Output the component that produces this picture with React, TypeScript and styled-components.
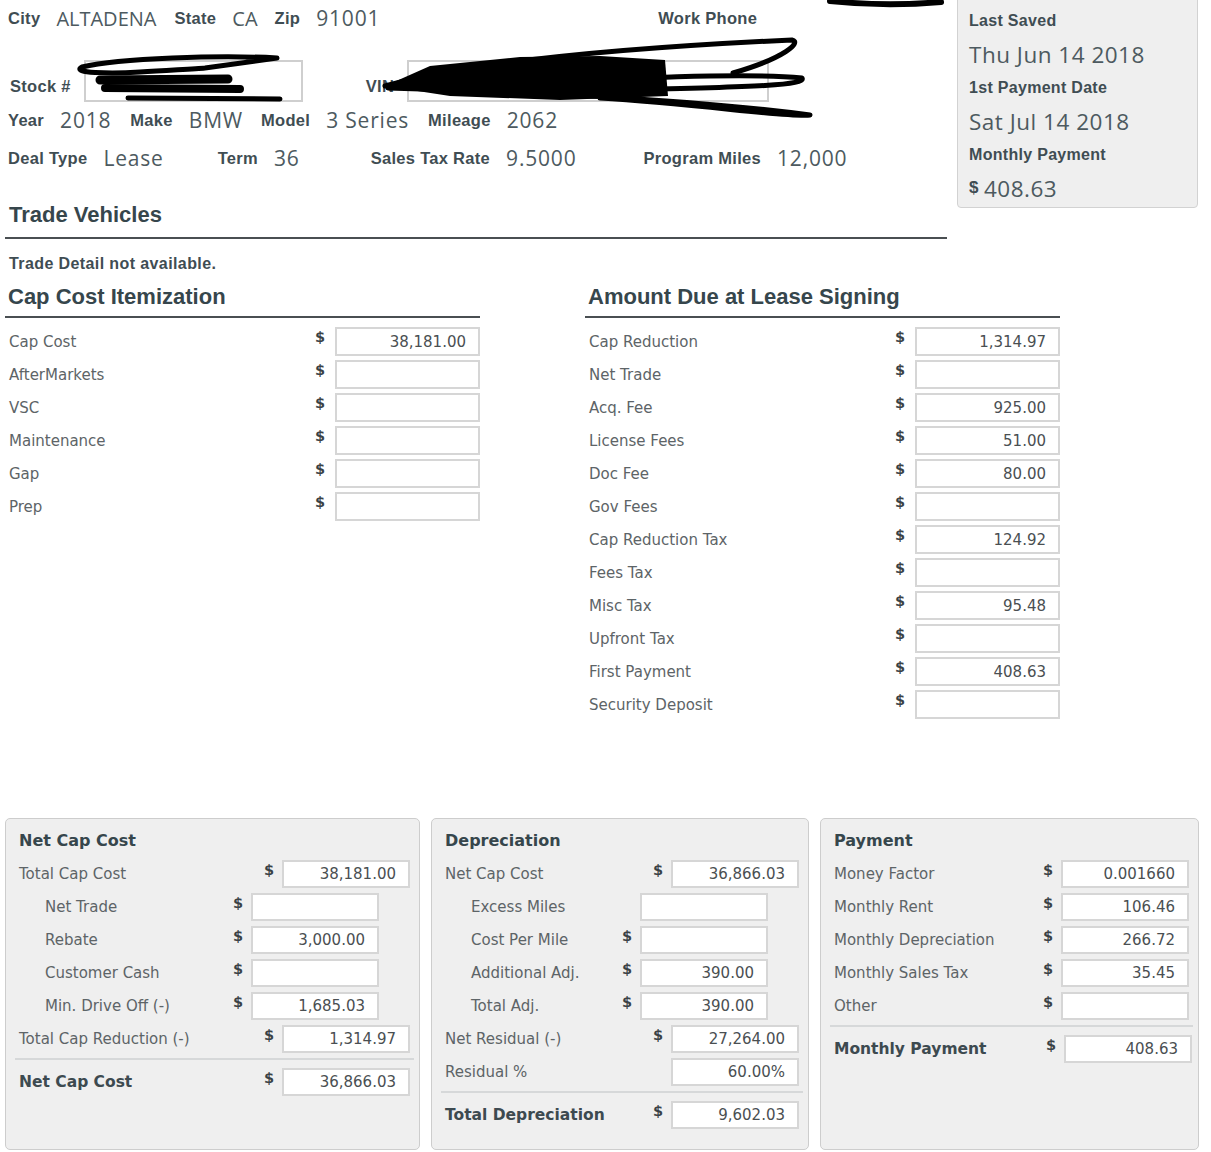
import React from "react";
import styled, { createGlobalStyle } from "styled-components";

const GlobalStyle = createGlobalStyle`
  html, body {
    margin: 0;
    padding: 0;
    background: #ffffff;
  }
  body {
    font-family: "Liberation Sans", Arial, sans-serif;
    color: #3a484e;
  }
`;

const Page = styled.div`
  position: relative;
  width: 1211px;
  min-height: 1152px;
  overflow: hidden;
`;

const Top = styled.div`
  display: flex;
  align-items: flex-start;
`;

const HeaderMain = styled.div`
  width: 942px;
  margin-left: 5px;
`;

const HeaderRow = styled.div<{ $h: number; $mt?: number }>`
  display: flex;
  align-items: center;
  height: ${(p) => p.$h}px;
  margin-top: ${(p) => p.$mt ?? 0}px;
  padding-left: 3px;
`;

const HLabel = styled.span<{ $ml?: number; $low?: boolean }>`
  font-family: "Liberation Sans", Arial, sans-serif;
  font-weight: bold;
  font-size: 16.5px;
  letter-spacing: 0.3px;
  color: #3f4d53;
  margin-left: ${(p) => p.$ml ?? 0}px;
  padding-top: ${(p) => (p.$low ? 12 : 0)}px;
  white-space: nowrap;
`;

const HValue = styled.span<{ $tight?: boolean }>`
  font-family: "Open Sans", sans-serif;
  font-size: ${(p) => (p.$tight ? "20px" : "21px")};
  letter-spacing: ${(p) => (p.$tight ? "0" : "0.8px")};
  color: #4d5a60;
  margin-left: 16px;
  white-space: nowrap;
`;

const IdBox = styled.div<{ $w: number }>`
  width: ${(p) => p.$w}px;
  height: 38px;
  border: 2px solid #cfcfcf;
  margin-left: 13px;
  background: #fff;
`;

const SectionTitle = styled.div<{ $mt: number }>`
  font-family: "Liberation Sans", Arial, sans-serif;
  font-weight: bold;
  font-size: 22px;
  line-height: 26px;
  color: #36464c;
  margin-top: ${(p) => p.$mt}px;
  padding-left: 4px;
  white-space: nowrap;
`;

const Rule = styled.div<{ $mt: number }>`
  height: 2px;
  background: #4a4f52;
  margin-top: ${(p) => p.$mt}px;
`;

const Summary = styled.div`
  width: 241px;
  height: 214px;
  margin-top: -6px;
  margin-left: 10px;
  box-sizing: border-box;
  background: #efefef;
  border: 1px solid #d2d2d2;
  border-radius: 4px;
  padding: 1px 0 0 11px;
`;

const SumLine = styled.div<{ $big?: boolean }>`
  height: 33.5px;
  display: flex;
  align-items: center;
  white-space: nowrap;
  font-family: ${(p) => (p.$big ? '"Open Sans", sans-serif' : '"Liberation Sans", Arial, sans-serif')};
  font-weight: ${(p) => (p.$big ? "normal" : "bold")};
  font-size: ${(p) => (p.$big ? "22.5px" : "16px")};
  letter-spacing: ${(p) => (p.$big ? "0.5px" : "0.3px")};
  color: ${(p) => (p.$big ? "#4d5a60" : "#3f4d53")};
  &:first-child {
    margin-top: 8px;
  }
`;

const SmallDollar = styled.span`
  font-family: "Liberation Sans", Arial, sans-serif;
  font-weight: bold;
  font-size: 17px;
  color: #3f4d53;
  margin-right: 5px;
`;

const Notice = styled.div`
  font-family: "Liberation Sans", Arial, sans-serif;
  font-weight: bold;
  font-size: 16px;
  letter-spacing: 0.4px;
  line-height: 20px;
  color: #3f4d53;
  margin: 15px 0 0 9px;
`;

const Columns = styled.div`
  display: grid;
  grid-template-columns: 475px 475px;
  column-gap: 105px;
  margin-left: 5px;
  align-items: start;
`;

const ColTitle = styled(SectionTitle)`
  padding-left: 3px;
`;

const ItemList = styled.div`
  margin-top: 9px;
`;

const ItemRow = styled.div`
  display: grid;
  grid-template-columns: 1fr 20px 145px;
  align-items: center;
  height: 29px;
  margin-bottom: 4px;
`;

const ItemLabel = styled.span<{ $bold?: boolean }>`
  font-family: "DejaVu Sans", Verdana, sans-serif;
  font-size: ${(p) => (p.$bold ? "15.5px" : "15px")};
  font-weight: ${(p) => (p.$bold ? "bold" : "normal")};
  color: ${(p) => (p.$bold ? "#3d4a50" : "#5d6467")};
  padding-left: 4px;
  white-space: nowrap;
`;

const Dollar = styled.span`
  font-family: "DejaVu Sans", Verdana, sans-serif;
  font-weight: bold;
  font-size: 14.5px;
  color: #3a4246;
  align-self: start;
  margin-top: 2px;
`;

const Amount = styled.div<{ $h?: number }>`
  height: ${(p) => p.$h ?? 29}px;
  box-sizing: border-box;
  border: 2px solid #d6d6d6;
  background: #fff;
  display: flex;
  align-items: center;
  justify-content: flex-end;
  padding-right: 12px;
  font-family: "DejaVu Sans", Verdana, sans-serif;
  font-size: 15px;
  color: #4a4f52;
`;

const Panels = styled.div`
  display: flex;
  gap: 10px;
  margin: 95px 0 0 5px;
`;

const Panel = styled.div<{ $w: number }>`
  width: ${(p) => p.$w}px;
  height: 332px;
  box-sizing: border-box;
  background: #efefef;
  border: 1px solid #cdcdcd;
  border-radius: 5px;
  padding: 11px 9px 0 13px;
  & + & {
    margin-left: ${(p) => (p.$w === 379 ? 1 : 0)}px;
  }
`;

const PanelTitle = styled.div`
  font-family: "DejaVu Sans", Verdana, sans-serif;
  font-weight: bold;
  font-size: 16px;
  line-height: 22px;
  color: #36464c;
  margin-bottom: 8px;
  white-space: nowrap;
`;

const PanelRow = styled.div<{ $indent?: boolean; $shift?: number }>`
  display: grid;
  grid-template-columns: 1fr 18px 128px;
  align-items: center;
  height: 28px;
  margin-bottom: 5px;
  padding-left: ${(p) => (p.$indent ? 26 : 0)}px;
  padding-right: ${(p) => (p.$indent ? 31 : 0) - (p.$shift ?? 0)}px;
  margin-right: ${(p) => -(p.$shift ?? 0)}px;
  ${ItemLabel} {
    padding-left: 0;
  }
`;

const Divider = styled.div`
  height: 2px;
  background: #d6d8d9;
  margin: 5px -4px 8px -4px;
`;

const Scribbles = styled.svg`
  position: absolute;
  left: 0;
  top: 0;
  pointer-events: none;
`;

type Item = { label: string; value?: string; noDollar?: boolean; indent?: boolean };

const capCost: Item[] = [
  { label: "Cap Cost", value: "38,181.00" },
  { label: "AfterMarkets" },
  { label: "VSC" },
  { label: "Maintenance" },
  { label: "Gap" },
  { label: "Prep" },
];

const amountDue: Item[] = [
  { label: "Cap Reduction", value: "1,314.97" },
  { label: "Net Trade" },
  { label: "Acq. Fee", value: "925.00" },
  { label: "License Fees", value: "51.00" },
  { label: "Doc Fee", value: "80.00" },
  { label: "Gov Fees" },
  { label: "Cap Reduction Tax", value: "124.92" },
  { label: "Fees Tax" },
  { label: "Misc Tax", value: "95.48" },
  { label: "Upfront Tax" },
  { label: "First Payment", value: "408.63" },
  { label: "Security Deposit" },
];

const netCap: Item[] = [
  { label: "Total Cap Cost", value: "38,181.00" },
  { label: "Net Trade", indent: true },
  { label: "Rebate", value: "3,000.00", indent: true },
  { label: "Customer Cash", indent: true },
  { label: "Min. Drive Off (-)", value: "1,685.03", indent: true },
  { label: "Total Cap Reduction (-)", value: "1,314.97" },
];

const depreciation: Item[] = [
  { label: "Net Cap Cost", value: "36,866.03" },
  { label: "Excess Miles", indent: true, noDollar: true },
  { label: "Cost Per Mile", indent: true },
  { label: "Additional Adj.", value: "390.00", indent: true },
  { label: "Total Adj.", value: "390.00", indent: true },
  { label: "Net Residual (-)", value: "27,264.00" },
  { label: "Residual %", value: "60.00%", noDollar: true },
];

const payment: Item[] = [
  { label: "Money Factor", value: "0.001660" },
  { label: "Monthly Rent", value: "106.46" },
  { label: "Monthly Depreciation", value: "266.72" },
  { label: "Monthly Sales Tax", value: "35.45" },
  { label: "Other" },
];

const ItemColumn = ({ title, items }: { title: string; items: Item[] }) => (
  <div>
    <ColTitle $mt={10}>{title}</ColTitle>
    <Rule $mt={6} />
    <ItemList>
      {items.map((it) => (
        <ItemRow key={it.label}>
          <ItemLabel>{it.label}</ItemLabel>
          <Dollar>$</Dollar>
          <Amount>{it.value}</Amount>
        </ItemRow>
      ))}
    </ItemList>
  </div>
);

const CalcPanel = ({
  width,
  title,
  items,
  totalLabel,
  totalValue,
  totalShift,
}: {
  width: number;
  title: string;
  items: Item[];
  totalLabel: string;
  totalValue: string;
  totalShift?: number;
}) => (
  <Panel $w={width}>
    <PanelTitle>{title}</PanelTitle>
    {items.map((it) => (
      <PanelRow key={it.label} $indent={it.indent}>
        <ItemLabel>{it.label}</ItemLabel>
        <Dollar>{it.noDollar ? "" : "$"}</Dollar>
        <Amount $h={28}>{it.value}</Amount>
      </PanelRow>
    ))}
    <Divider />
    <PanelRow $shift={totalShift}>
      <ItemLabel $bold>{totalLabel}</ItemLabel>
      <Dollar>$</Dollar>
      <Amount $h={28}>{totalValue}</Amount>
    </PanelRow>
  </Panel>
);

export default function App() {
  return (
    <Page>
      <GlobalStyle />
      <Top>
        <HeaderMain>
          <HeaderRow $h={24} $mt={6}>
            <HLabel>City</HLabel>
            <HValue $tight>ALTADENA</HValue>
            <HLabel $ml={18}>State</HLabel>
            <HValue $tight>CA</HValue>
            <HLabel $ml={17}>Zip</HLabel>
            <HValue>91001</HValue>
            <HLabel $ml={278}>Work Phone</HLabel>
          </HeaderRow>
          <HeaderRow $h={41} $mt={30}>
            <HLabel $ml={2} $low>
              Stock #
            </HLabel>
            <IdBox $w={215} />
            <HLabel $ml={63} $low>
              VIN
            </HLabel>
            <IdBox $w={358} />
          </HeaderRow>
          <HeaderRow $h={28} $mt={5}>
            <HLabel>Year</HLabel>
            <HValue>2018</HValue>
            <HLabel $ml={19}>Make</HLabel>
            <HValue>BMW</HValue>
            <HLabel $ml={18}>Model</HLabel>
            <HValue>3 Series</HValue>
            <HLabel $ml={19}>Mileage</HLabel>
            <HValue>2062</HValue>
          </HeaderRow>
          <HeaderRow $h={28} $mt={10}>
            <HLabel>Deal Type</HLabel>
            <HValue>Lease</HValue>
            <HLabel $ml={54}>Term</HLabel>
            <HValue>36</HValue>
            <HLabel $ml={71}>Sales Tax Rate</HLabel>
            <HValue>9.5000</HValue>
            <HLabel $ml={67}>Program Miles</HLabel>
            <HValue>12,000</HValue>
          </HeaderRow>
          <SectionTitle $mt={30}>Trade Vehicles</SectionTitle>
          <Rule $mt={9} />
        </HeaderMain>
        <Summary>
          <SumLine>Last Saved</SumLine>
          <SumLine $big>Thu Jun 14 2018</SumLine>
          <SumLine>1st Payment Date</SumLine>
          <SumLine $big>Sat Jul 14 2018</SumLine>
          <SumLine>Monthly Payment</SumLine>
          <SumLine $big>
            <SmallDollar>$</SmallDollar>408.63
          </SumLine>
        </Summary>
      </Top>
      <Notice>Trade Detail not available.</Notice>
      <Columns>
        <ItemColumn title="Cap Cost Itemization" items={capCost} />
        <ItemColumn title="Amount Due at Lease Signing" items={amountDue} />
      </Columns>
      <Panels>
        <CalcPanel
          width={415}
          title="Net Cap Cost"
          items={netCap}
          totalLabel="Net Cap Cost"
          totalValue="36,866.03"
        />
        <CalcPanel
          width={378}
          title="Depreciation"
          items={depreciation}
          totalLabel="Total Depreciation"
          totalValue="9,602.03"
        />
        <CalcPanel
          width={379}
          title="Payment"
          items={payment}
          totalLabel="Monthly Payment"
          totalValue="408.63"
          totalShift={3}
        />
      </Panels>
      <Scribbles width="1211" height="130" viewBox="0 0 1211 130">
        <g fill="none" stroke="#000" strokeLinecap="round" strokeLinejoin="round">
          <path d="M 830 1 Q 885 7 941 2" strokeWidth="6" />
          <path d="M 277 58 C 220 55, 120 58, 82 67 C 70 73, 110 74, 140 72 C 170 70, 195 69, 205 68 L 277 58" strokeWidth="5" />
          <path d="M 100 80 L 228 79" strokeWidth="9" />
          <path d="M 105 88 L 240 89" strokeWidth="8" />
          <path d="M 128 98 L 280 99" strokeWidth="5" />
          <path d="M 385 86 C 470 62, 620 48, 792 40 C 802 42, 785 58, 733 73" strokeWidth="5" />
          <path d="M 600 80 C 680 76, 760 74, 802 78 C 806 85, 760 87, 620 90" strokeWidth="5" />
          <path d="M 388 88 C 520 92, 680 98, 810 115 C 790 118, 700 104, 600 98" strokeWidth="5" />
        </g>
        <path d="M 385 86 L 430 66 L 520 57 L 600 56 L 665 60 L 668 96 L 560 100 L 450 96 Z" fill="#000" />
      </Scribbles>
    </Page>
  );
}
